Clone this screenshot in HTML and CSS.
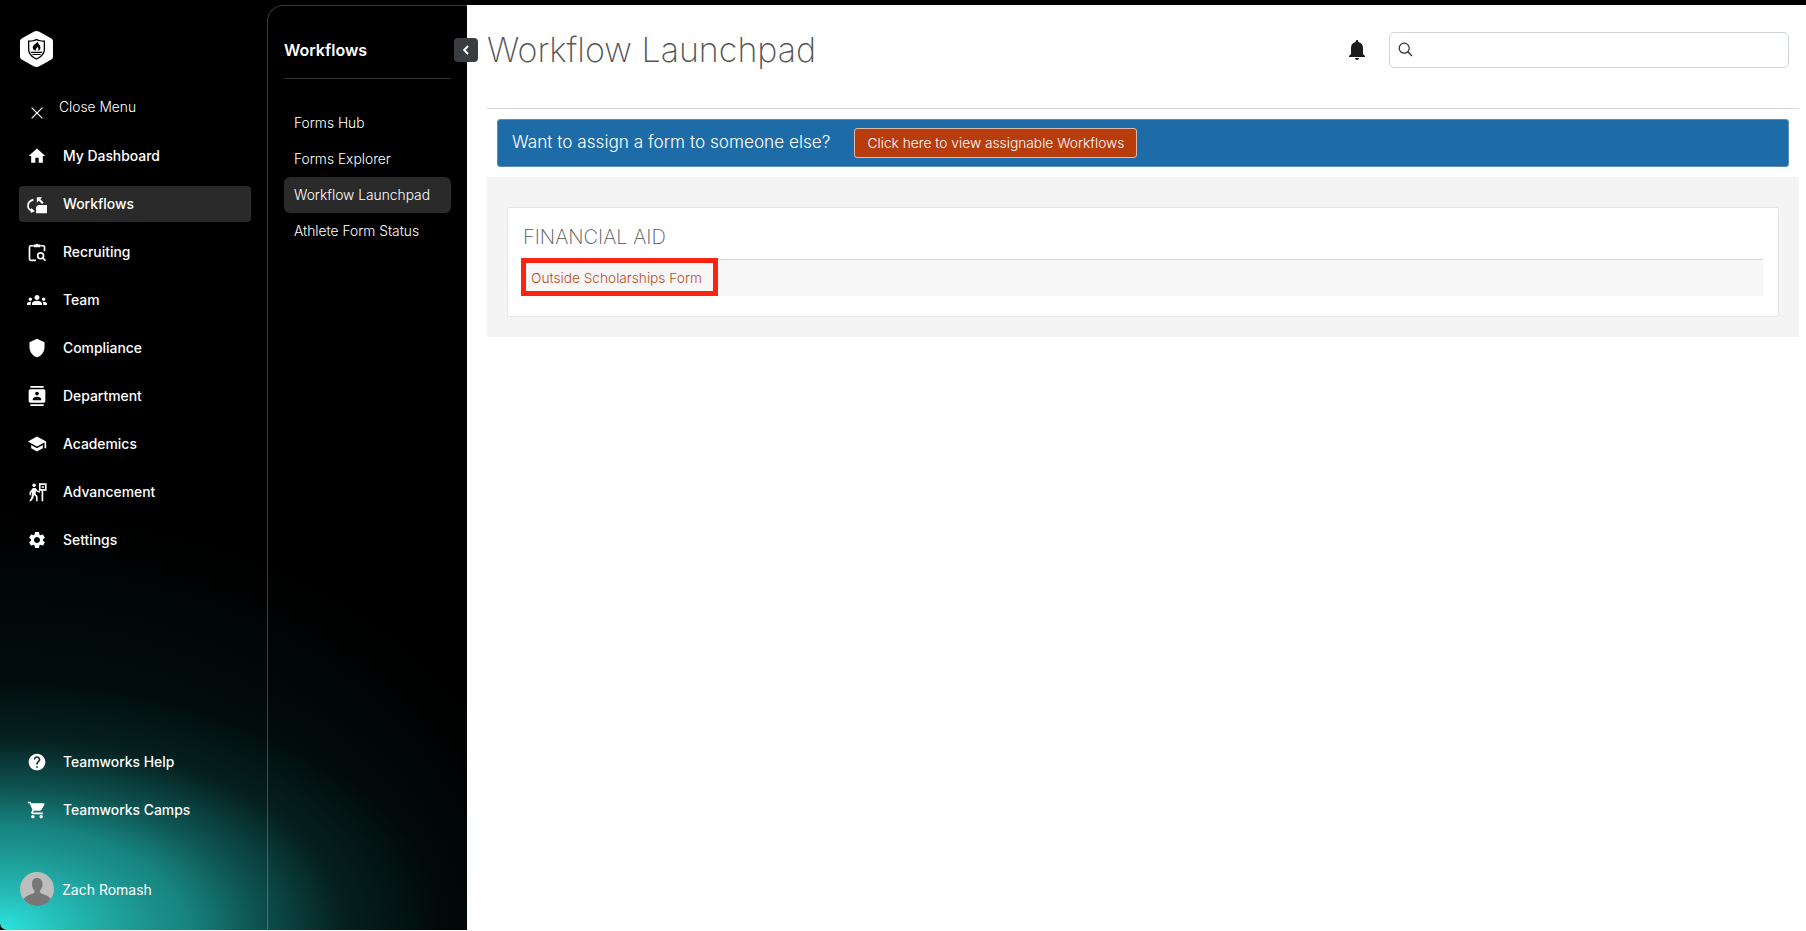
FILE: index.html
```html
<!DOCTYPE html>
<html lang="en">
<head>
<meta charset="utf-8">
<title>Workflow Launchpad</title>
<link rel="stylesheet" href="styles.css">
</head>
<body>
<div class="app">
  <nav class="rail">
    <div class="primary">
      <a class="logo" aria-label="Teamworks">
        <svg viewBox="0 0 33 36" width="33" height="36">
          <path fill="#fff" d="M16.5 0 C17.5 0 18.5 .3 19.3 .8 L30.500 7.1 C32.300 8.100 33 9.200 33 10.600 V25.400 C33 26.800 32.300 27.900 30.500 28.900 L19.300 35.200 C17.600 36.200 15.400 36.200 13.700 35.200 L2.500 28.900 C.7 27.900 0 26.800 0 25.400 V10.600 C0 9.200 .7 8.100 2.500 7.100 L13.700 .8 C14.500 .3 15.500 0 16.500 0z"/>
          <path fill="#000" d="M8 9.500 C11.800 9.500 14.400 9 16.500 7.700 C18.600 9 21.200 9.500 25 9.500 V18 C25 22.800 21.800 26.500 16.500 28.800 C11.200 26.500 8 22.800 8 18z"/>
          <path fill="#fff" d="M9.300 10.800 C12.500 10.700 14.800 10.300 16.500 9.300 C18.200 10.300 20.500 10.700 23.700 10.800 V18 C23.700 22 21 25.200 16.500 27.300 C12 25.200 9.300 22 9.300 18z"/>
          <path fill="#000" d="M17.600 10.800 C18 13.200 20.800 14.300 20.400 17.200 C20.200 18.700 19.200 19.500 17.800 19.800 C18.900 18.500 18.500 17 17.200 15.800 C17 17 16 17.500 15.800 18.500 C15.700 19 15.800 19.400 16 19.800 C13.800 19.500 12.600 18.100 12.700 16.300 C12.800 14.600 14.200 13.900 15.300 12.800 C16.200 12.100 17.100 11.500 17.600 10.800z"/>
          <path fill="#000" d="M10.500 20.800 H22.500 L22 22 H11z M12 23.100 H21 L20.200 24.100 H12.800z"/>
        </svg>
      </a>
      <a class="close-menu">
        <svg class="close-icon" viewBox="0 0 12 12" width="12" height="12"><path d="M.6.6 11.400 11.400M11.400.6.6 11.400" stroke="#fff" stroke-width="1.200" fill="none"/></svg>
        <span>Close Menu</span>
      </a>
      <ul class="menu">
        <li class="item"><svg class="ico" viewBox="0 0 24 24"><path d="M10 20v-6h4v6h5v-8h3L12 3 2 12h3v8z"/></svg>My Dashboard</li>
        <li class="item is-active"><svg class="ico" viewBox="0 0 24 24"><path class="line" d="M7.800 6.800C3.800 8 1.200 10.400 1.200 14c0 2.800 1.600 5 4.800 6.300"/><path d="M5 16.800l4.500 3.900-5 2.200z"/><path d="M11.800 4h6.400l-2.200 2.200 4 4-1.900 1.900-4-4-2.300 2.300z"/><path d="M13.200 13.200H24V23H10.800v-7.400z"/></svg>Workflows</li>
        <li class="item"><svg class="ico" viewBox="0 0 24 24"><path class="line" d="M8 4.500H4.600c-.9 0-1.600.7-1.600 1.600v14.300c0 .9.7 1.600 1.600 1.600h6.200M16 4.500h3.400c.9 0 1.600.7 1.600 1.600V11"/><path d="M8 3h2.500a1.600 1.600 0 0 1 3 0H16v3.400H8z"/><circle class="line" cx="16.300" cy="16.600" r="3.500"/><path class="line" d="M18.800 19.100l3.400 3.400"/></svg>Recruiting</li>
        <li class="item"><svg class="ico" viewBox="0 0 24 24"><path d="M4 13c1.100 0 2-.9 2-2 0-1.100-.9-2-2-2s-2 .9-2 2c0 1.100.9 2 2 2zm1.130 1.100C4.760 14.040 4.390 14 4 14c-.99 0-1.930.21-2.780.58C.48 14.900 0 15.620 0 16.430V18h4.500v-1.610c0-.83.23-1.610.63-2.290zM20 13c1.100 0 2-.9 2-2 0-1.100-.9-2-2-2s-2 .9-2 2c0 1.100.9 2 2 2zm4 3.430c0-.81-.48-1.530-1.220-1.850C21.930 14.210 20.990 14 20 14c-.39 0-.76.04-1.130.1.4.68.63 1.460.63 2.290V18H24v-1.570zM16.240 13.650c-1.170-.52-2.610-.9-4.240-.9s-3.070.39-4.240.9C6.680 14.130 6 15.210 6 16.390V18h12v-1.610c0-1.180-.68-2.260-1.760-2.740zM12 12c1.660 0 3-1.340 3-3s-1.340-3-3-3-3 1.340-3 3 1.340 3 3 3z"/></svg>Team</li>
        <li class="item"><svg class="ico" viewBox="0 0 24 24"><path d="M12 1 3 5v6c0 5.550 3.840 10.740 9 12 5.160-1.260 9-6.450 9-12V5l-9-4z"/></svg>Compliance</li>
        <li class="item"><svg class="ico" viewBox="0 0 24 24"><path d="M20 0H4v2h16V0zM4 24h16v-2H4v2zM20 4H4c-1.100 0-2 .9-2 2v12c0 1.100.9 2 2 2h16c1.100 0 2-.9 2-2V6c0-1.100-.9-2-2-2zm-8 2.750c1.240 0 2.250 1.010 2.250 2.250s-1.010 2.250-2.250 2.250S9.750 10.240 9.750 9 10.760 6.750 12 6.750zM17 17H7v-1.500c0-1.670 3.330-2.500 5-2.500s5 .83 5 2.500V17z"/></svg>Department</li>
        <li class="item"><svg class="ico" viewBox="0 0 24 24"><path d="M5 13.180v4L12 21l7-3.820v-4L12 17l-7-3.820zM12 3 1 9l11 6 9-4.910V17h2V9L12 3z"/></svg>Academics</li>
        <li class="item"><svg class="ico" viewBox="0 0 24 24"><circle cx="8.500" cy="3.800" r="2.100"/><path d="M7 7.200h3.300l2.400 3 3 1v1.800l-3.800-1.200-1.100-1.300-.5 4 2.400 2.300V23h-1.900v-5.200l-2.400-2.100-.9 3.700L4.800 23H2.700l2.600-4.800L6 12.400l-1.300.8V16H3v-3.800z"/><path class="line" d="M15.300 2.500h7.200v7h-7.200zM18.500 9.500V23M17.600 6h2.800"/></svg>Advancement</li>
        <li class="item"><svg class="ico" viewBox="0 0 24 24"><path d="M19.140 12.940c.04-.3.06-.61.06-.94 0-.32-.02-.64-.07-.94l2.030-1.580c.18-.14.23-.41.12-.61l-1.920-3.320c-.12-.22-.37-.29-.59-.22l-2.390.96c-.5-.38-1.030-.7-1.620-.94l-.36-2.540c-.04-.24-.24-.41-.48-.41h-3.840c-.24 0-.43.17-.47.41l-.36 2.540c-.59.24-1.130.57-1.620.94l-2.390-.96c-.22-.08-.47 0-.59.22L2.740 8.870c-.12.21-.08.47.12.61l2.030 1.580c-.05.3-.09.63-.09.94s.02.64.07.94l-2.030 1.580c-.18.14-.23.41-.12.61l1.920 3.320c.12.22.37.29.59.22l2.390-.96c.5.38 1.030.7 1.620.94l.36 2.540c.05.24.24.41.48.41h3.840c.24 0 .44-.17.47-.41l.36-2.540c.59-.24 1.130-.56 1.620-.94l2.390.96c.22.08.47 0 .59-.22l1.920-3.320c.12-.22.07-.47-.12-.61l-2.010-1.580zM12 15.600c-1.980 0-3.600-1.620-3.600-3.600s1.620-3.600 3.600-3.600 3.600 1.620 3.600 3.600-1.620 3.600-3.600 3.600z"/></svg>Settings</li>
      </ul>
      <ul class="menu menu-foot">
        <li class="item"><svg class="ico" viewBox="0 0 24 24"><path d="M12 2C6.480 2 2 6.480 2 12s4.480 10 10 10 10-4.480 10-10S17.520 2 12 2zm1 17h-2v-2h2v2zm2.070-7.750-.9.92C13.450 12.900 13 13.500 13 15h-2v-.5c0-1.100.45-2.100 1.170-2.830l1.240-1.260c.37-.36.59-.86.59-1.410 0-1.100-.9-2-2-2s-2 .9-2 2H8c0-2.210 1.790-4 4-4s4 1.790 4 4c0 .88-.36 1.680-.93 2.250z"/></svg>Teamworks Help</li>
        <li class="item"><svg class="ico" viewBox="0 0 24 24"><path d="M7 18c-1.100 0-1.990.9-1.990 2S5.900 22 7 22s2-.9 2-2-.9-2-2-2zM1 2v2h2l3.600 7.590-1.350 2.450c-.16.28-.25.61-.25.96 0 1.100.9 2 2 2h12v-2H7.420c-.14 0-.25-.11-.25-.25l.03-.12.9-1.630h7.450c.75 0 1.410-.41 1.750-1.030l3.580-6.490c.08-.14.12-.31.12-.48 0-.55-.45-1-1-1H5.210l-.94-2H1zm16 16c-1.100 0-1.990.9-1.990 2s.89 2 1.990 2 2-.9 2-2-.9-2-2-2z"/></svg>Teamworks Camps</li>
      </ul>
      <div class="user">
        <svg class="avatar" viewBox="0 0 34 34"><circle cx="17" cy="17" r="17" fill="#bdbdbd"/><path fill="#777" d="M17 6c3.300 0 5.500 2.500 5.500 6 0 2.800-1 5-2.400 6.300v2.200c1.200 1.200 5 2.300 7.400 3.500 1.600.8 2.700 2.200 3.200 3.500A17 17 0 0 1 17 34 17 17 0 0 1 3.800 27.500c.5-1.300 1.600-2.700 3.200-3.500 2.400-1.200 6.200-2.300 7.400-3.500v-2.200C13 17 12 14.800 12 12c0-3.500 1.700-6 5-6z"/></svg>
        <span>Zach Romash</span>
      </div>
    </div>
    <div class="secondary">
      <h2 class="sec-title">Workflows</h2>
      <button class="collapse" aria-label="Collapse"><svg viewBox="0 0 8 10" width="8" height="10"><path d="M6 1 2.200 5 6 9" stroke="#fff" stroke-width="2" fill="none"/></svg></button>
      <ul class="sec-list">
        <li class="sec-item">Forms Hub</li>
        <li class="sec-item">Forms Explorer</li>
        <li class="sec-item is-active">Workflow Launchpad</li>
        <li class="sec-item">Athlete Form Status</li>
      </ul>
    </div>
  </nav>
  <main class="main">
    <header class="head">
      <h1 class="title">Workflow Launchpad</h1>
      <svg class="bell" viewBox="0 0 16 20" width="16" height="20"><path fill="#1c1c1c" d="M8 0c.8 0 1.300.6 1.300 1.300v.6C12.200 2.500 14 4.900 14 7.800V14l2 2v1H0v-1l2-2V7.800c0-2.900 1.800-5.300 4.700-5.900v-.6C6.700.6 7.200 0 8 0zM6 18h4a2 2 0 0 1-4 0z"/></svg>
      <div class="search">
        <svg viewBox="0 0 15 15" width="15" height="15"><circle cx="6.200" cy="6.200" r="5" stroke="#2b3036" stroke-width="1.200" fill="none"/><path d="M9.800 9.800 14 14" stroke="#2b3036" stroke-width="1.300" fill="none"/></svg>
      </div>
    </header>
    <div class="banner">
      <span class="banner-text">Want to assign a form to someone else?</span>
      <a class="banner-btn">Click here to view assignable Workflows</a>
    </div>
    <section class="panel">
      <div class="card">
        <h3 class="card-title">FINANCIAL AID</h3>
        <div class="row"><a class="form-link">Outside Scholarships Form</a></div>
      </div>
    </section>
  </main>
</div>
</body>
</html>
```
FILE: styles.css
```css
* { box-sizing: border-box; }
html, body { margin: 0; padding: 0; background: #fff; }
body { font-family: Inter, "Liberation Sans", sans-serif; height: 931px; overflow: hidden; }
ul { list-style: none; margin: 0; padding: 0; }
h1, h2, h3 { margin: 0; }

.app { display: flex; height: 930px; background: #000; padding-top: 5px; }

.rail {
  display: flex;
  width: 467px;
  margin-top: -5px;
  padding-top: 5px;
  flex: none;
  border-bottom-left-radius: 7px;
  background:
    radial-gradient(ellipse 520px 290px at 0 100%, #2de6df 0%, #25bdb8 12%, #1b8f8a 30%, #178480 36%, #0e5452 49%, rgba(5,35,34,.85) 66%, rgba(1,14,14,.3) 85%, rgba(0,0,0,0) 100%),
    radial-gradient(ellipse 560px 420px at 0 100%, #031c1b 0%, #021110 50%, #000 100%);
}

.primary { width: 267px; flex: none; display: flex; flex-direction: column; color: #fff; padding: 0 16px 0 19px; }
.logo { display: block; margin: 26px 0 0 1px; height: 36px; }
.logo svg { display: block; }
.close-menu { display: flex; align-items: flex-start; margin: 32px 0 0 12px; font-size: 13.800px; font-weight: 300; line-height: 17px; height: 23px; }
.close-icon { margin: 8px 16px 0 0; flex: none; }

.menu { display: flex; flex-direction: column; gap: 12px; margin-top: 16px; }
.menu-foot { margin-top: auto; }
.item { display: flex; align-items: center; gap: 16px; height: 36px; padding-left: 8px; border-radius: 4px; font-size: 13.900px; font-weight: 500; }
.item.is-active { background: #2a2a2a; }
.ico { width: 20px; height: 20px; fill: #fff; flex: none; }
.ico .line { fill: none; stroke: #fff; stroke-width: 2; }

.user { display: flex; align-items: center; gap: 8px; margin: 44px 0 24px 1px; font-size: 14px; font-weight: 400; }
.avatar { width: 34px; height: 34px; display: block; flex: none; }

.secondary { position: relative; width: 200px; flex: none; border-left: 1px solid rgba(255,255,255,.22); border-top: 1px solid rgba(255,255,255,.22); border-top-left-radius: 16px; padding: 0 16px; color: #fff; }
.sec-title { font-size: 16px; font-weight: 600; line-height: 20px; padding: 34px 0 18px; border-bottom: 1px solid #333; }
.collapse { position: absolute; top: 32px; right: -11px; width: 24px; height: 24px; padding: 0; border: 0; border-radius: 4px; background: #3a3d3f; display: flex; align-items: center; justify-content: center; z-index: 2; }
.sec-list { display: flex; flex-direction: column; margin-top: 26px; }
.sec-item { height: 36px; line-height: 36px; padding-left: 10px; border-radius: 6px; font-size: 13.800px; font-weight: 300; }
.sec-item.is-active { background: #2a2a2a; }

.main { flex: 1; min-width: 0; background: #fff; padding: 0 7px 0 20px; height: 925px; }
.head { display: flex; align-items: center; height: 104px; padding: 0 10px 10px 0; border-bottom: 1px solid #d6d6d6; }
.title { flex: 1; font-size: 34px; font-weight: 200; color: #555; line-height: 44px; margin-top: -4px; }
.bell { margin: -4px 24px 0 0; }
.search { width: 400px; height: 36px; border: 1px solid #ced4da; border-radius: 5px; margin-top: -4px; padding-left: 8px; display: flex; align-items: center; }

.banner { display: flex; align-items: center; margin: 10px 10.500px 0 10px; height: 48px; padding-left: 14px; background: #1d6ca8; border: 1px solid #5d90b8; border-radius: 3px; color: #fff; }
.banner-text { font-size: 17.200px; font-weight: 300; margin-top: -4px; }
.banner-btn { margin-left: 24px; height: 30px; line-height: 28px; padding: 0 12px; background: #b93c0d; border: 1px solid #e0b9a8; border-radius: 3px; font-size: 13.750px; font-weight: 300; white-space: nowrap; }

.panel { margin-top: 10px; padding: 30px 20px 20px; background: #f4f4f4; }
.card { background: #fff; border: 1px solid #e6e6e6; border-radius: 2px; padding: 15px 15px 19px; height: 110px; }
.card-title { font-size: 20px; font-weight: 200; color: #555; line-height: 29px; height: 37px; border-bottom: 1px solid #d6d6d6; }
.row { display: flex; height: 36px; background: #f7f7f7; }
.form-link { display: block; margin: -2px 0 0 -2px; width: 197px; height: 38px; line-height: 28px; border: 5px solid #fe2210; padding: 1px 0 0 5px; font-size: 13.700px; font-weight: 300; color: #bf4a21; white-space: nowrap; }
```
